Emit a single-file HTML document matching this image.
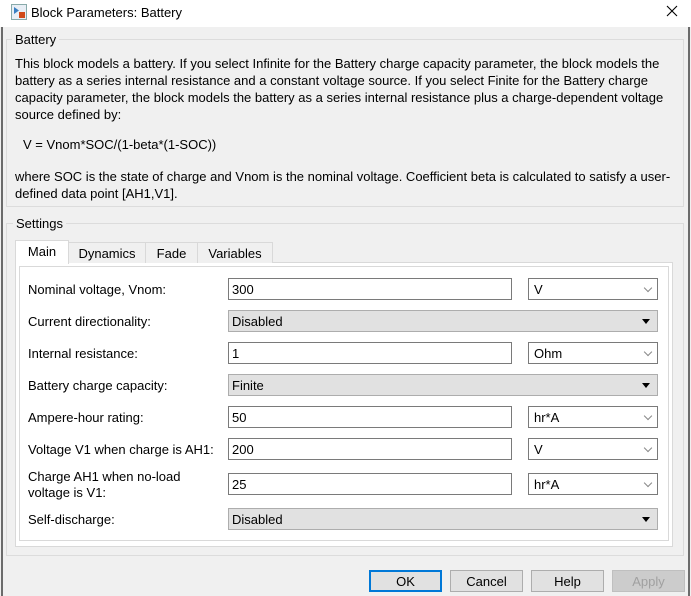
<!DOCTYPE html>
<html><head><style>
*{box-sizing:border-box;margin:0;padding:0}
body{width:691px;height:596px;background:#f0f0f0;font-family:"Liberation Sans",sans-serif;font-size:13px;color:#000;position:relative;overflow:hidden}
.a{position:absolute}
.title{left:0;top:0;width:691px;height:27px;background:#fff}
.gb{border:1px solid #dcdcdc}
.lbl{background:#f0f0f0;padding:0 3px}
.inp{background:#fff;border:1px solid #7a7a7a;height:22px;padding:3px 0 0 3px;white-space:nowrap}
.dd{background:#fff;border:1px solid #7a7a7a;height:22px;padding:3px 0 0 5px}
.dd:after{content:"";position:absolute;right:6px;top:6px;width:5px;height:5px;border-right:1px solid #888;border-bottom:1px solid #888;transform:rotate(45deg)}
.sel{background:#e1e1e1;border:1px solid #adadad;height:22px;padding:3px 0 0 3px}
.sel:after{content:"";position:absolute;right:7px;top:8px;border-left:4px solid transparent;border-right:4px solid transparent;border-top:5px solid #000}
.btn{background:#e1e1e1;border:1px solid #adadad;height:22px;text-align:center;padding-top:3px;top:570px}
.tab{top:242px;height:21px;border:1px solid #d9d9d9;border-bottom:none;background:#f0f0f0;text-align:center;padding-top:3px}
</style></head><body>
<div class="a title"></div>
<div class="a" style="left:3px;top:27px;width:685px;height:569px;background:#f0f0f0"></div>
<div class="a" style="left:1px;top:27px;width:2px;height:569px;background:#6b6b6b"></div>
<div class="a" style="left:688px;top:27px;width:2px;height:569px;background:#6b6b6b"></div>
<svg class="a" style="left:11px;top:4px" width="16" height="16" viewBox="0 0 16 16"><rect x="0.5" y="0.5" width="15" height="15" fill="#e8eef5" stroke="#8aa"/><path d="M3 3 L3 10 L8 6.5Z" fill="#3a7fc1"/><rect x="8" y="8" width="6" height="6" fill="#d14a1a"/></svg>
<div class="a" style="left:31px;top:5px;font-size:13px">Block Parameters: Battery</div>
<svg class="a" style="left:666px;top:5px" width="12" height="12" viewBox="0 0 12 12"><path d="M1 1L11 11M11 1L1 11" stroke="#000" stroke-width="1.1"/></svg>

<div class="a gb" style="left:6px;top:39px;width:678px;height:168px"></div>
<div class="a lbl" style="left:12px;top:32px">Battery</div>
<div class="a" style="left:15px;top:55px;width:660px;line-height:17px">This block models a battery. If you select Infinite for the Battery charge capacity parameter, the block models the battery as a series internal resistance and a constant voltage source. If you select Finite for the Battery charge capacity parameter, the block models the battery as a series internal resistance plus a charge-dependent voltage source defined by:</div>
<div class="a" style="left:23px;top:137px">V = Vnom*SOC/(1-beta*(1-SOC))</div>
<div class="a" style="left:15px;top:168px;width:668px;line-height:17px">where SOC is the state of charge and Vnom is the nominal voltage. Coefficient beta is calculated to satisfy a user-defined data point [AH1,V1].</div>

<div class="a gb" style="left:6px;top:223px;width:678px;height:333px"></div>
<div class="a lbl" style="left:13px;top:216px">Settings</div>
<div class="a" style="left:15px;top:262px;width:658px;height:285px;background:#fff;border:1px solid #d9d9d9"></div>
<div class="a" style="left:19px;top:266px;width:650px;height:275px;border:1px solid #d9d9d9"></div>
<div class="a tab" style="left:68px;width:78px">Dynamics</div>
<div class="a tab" style="left:145px;width:53px">Fade</div>
<div class="a tab" style="left:197px;width:76px">Variables</div>
<div class="a tab" style="left:15px;top:240px;width:54px;height:24px;background:#fff">Main</div>

<div class="a" style="left:28px;top:282px">Nominal voltage, Vnom:</div>
<div class="a inp" style="left:228px;top:278px;width:284px">300</div>
<div class="a dd" style="left:528px;top:278px;width:130px">V</div>
<div class="a" style="left:28px;top:314px">Current directionality:</div>
<div class="a sel" style="left:228px;top:310px;width:430px">Disabled</div>
<div class="a" style="left:28px;top:346px">Internal resistance:</div>
<div class="a inp" style="left:228px;top:342px;width:284px">1</div>
<div class="a dd" style="left:528px;top:342px;width:130px">Ohm</div>
<div class="a" style="left:28px;top:378px">Battery charge capacity:</div>
<div class="a sel" style="left:228px;top:374px;width:430px">Finite</div>
<div class="a" style="left:28px;top:410px">Ampere-hour rating:</div>
<div class="a inp" style="left:228px;top:406px;width:284px">50</div>
<div class="a dd" style="left:528px;top:406px;width:130px">hr*A</div>
<div class="a" style="left:28px;top:442px">Voltage V1 when charge is AH1:</div>
<div class="a inp" style="left:228px;top:438px;width:284px">200</div>
<div class="a dd" style="left:528px;top:438px;width:130px">V</div>
<div class="a" style="left:28px;top:469px;line-height:16px">Charge AH1 when no-load<br>voltage is V1:</div>
<div class="a inp" style="left:228px;top:473px;width:284px">25</div>
<div class="a dd" style="left:528px;top:473px;width:130px">hr*A</div>
<div class="a" style="left:28px;top:512px">Self-discharge:</div>
<div class="a sel" style="left:228px;top:508px;width:430px">Disabled</div>

<div class="a btn" style="left:369px;width:73px;border:2px solid #0078d7;padding-top:2px">OK</div>
<div class="a btn" style="left:450px;width:73px">Cancel</div>
<div class="a btn" style="left:531px;width:73px">Help</div>
<div class="a btn" style="left:612px;width:73px;color:#a0a0a0;background:#ccc;border-color:#bfbfbf">Apply</div>
</body></html>
